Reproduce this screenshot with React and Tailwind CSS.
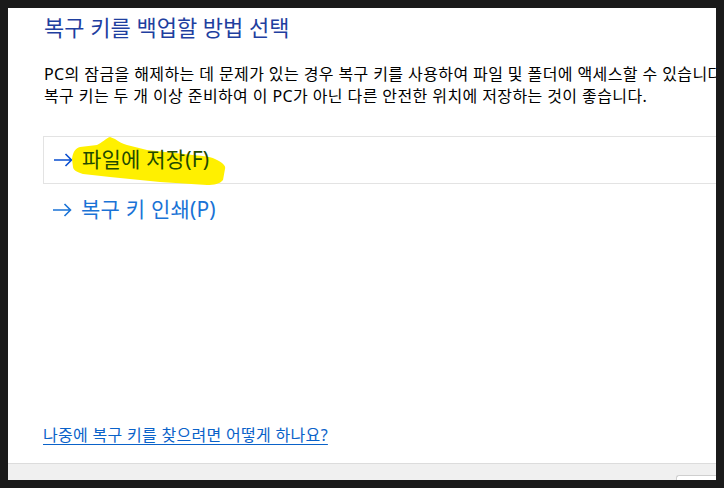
const FONT = { fontFamily: '"Noto Sans", "Noto Sans CJK KR", sans-serif' };

function Arrow({ className }) {
  return (
    <svg width="20" height="14" viewBox="0 0 20 14" fill="none" className={className}>
      <path d="M1 7H18.5M12.5 1L18.5 7L12.5 13" stroke="currentColor" strokeWidth="1.6" />
    </svg>
  );
}

function Highlight() {
  // yellow marker scribble drawn over the first option
  return (
    <svg
      className="absolute left-0 top-0 pointer-events-none"
      width="200"
      height="52"
      viewBox="0 0 200 52"
    >
      <path
        d="M28 22 C29 14 32 11 36 10 L53 8 C58 6 62 1 66 0 L71 2 C75 5 79 7 83 8 L103 13 L149 18 C160 19 168 20 173 23 C180 26 182 30 181 32 L179 43 C176 47 170 48 163 48 L116 45 L66 40 L39 37 C33 35 29 33 29 30 Z"
        fill="#fff000"
      />
    </svg>
  );
}

export default function App() {
  return (
    <div className="w-[724px] h-[488px] bg-[#1a1a1a] pt-2 pl-2 pr-2 pb-2" style={FONT}>
      <div className="h-full flex flex-col bg-white overflow-hidden">
        <div className="flex-1 pl-[36px] overflow-hidden">
          <h1 className="mt-[5px] text-[22px] leading-[28px] text-[#1f3f9f] whitespace-nowrap">
            복구 키를 백업할 방법 선택
          </h1>
          <div className="mt-[22px] text-[16px] leading-[22px] tracking-[0.4px] text-black whitespace-nowrap">
            <div>PC의 잠금을 해제하는 데 문제가 있는 경우 복구 키를 사용하여 파일 및 폴더에 액세스할 수 있습니다.</div>
            <div>복구 키는 두 개 이상 준비하여 이 PC가 아닌 다른 안전한 위치에 저장하는 것이 좋습니다.</div>
          </div>

          <div className="mt-[29px] -ml-px w-[700px] h-[48px] border border-[#e3e3e3] relative flex items-center pl-[9px] gap-[9px]">
            <Arrow className="relative text-[#0a4fd0]" />
            <Highlight />
            <span className="relative text-[21px] tracking-[0.2px] text-[#1f4a00] whitespace-nowrap">파일에 저장(F)</span>
          </div>

          <div className="mt-[4px] h-[44px] flex items-center pl-[8px] gap-[9px] text-[#1a73d6]">
            <Arrow />
            <span className="text-[21px] tracking-[0.2px] whitespace-nowrap">복구 키 인쇄(P)</span>
          </div>

          <div className="mt-[191px]">
            <a href="#" className="text-[16px] leading-[22px] tracking-[0.3px] text-[#0a62c9] underline underline-offset-[3px] whitespace-nowrap -ml-px">
              나중에 복구 키를 찾으려면 어떻게 하나요?
            </a>
          </div>
        </div>
        <div className="h-[17px] border-t border-[#dcdcdc] bg-[#f0f0f0] flex justify-end items-end">
          <div className="w-[40px] h-[5px] bg-white border-l border-t border-[#cfcfcf] rounded-tl-[3px]" />
        </div>
      </div>
    </div>
  );
}
